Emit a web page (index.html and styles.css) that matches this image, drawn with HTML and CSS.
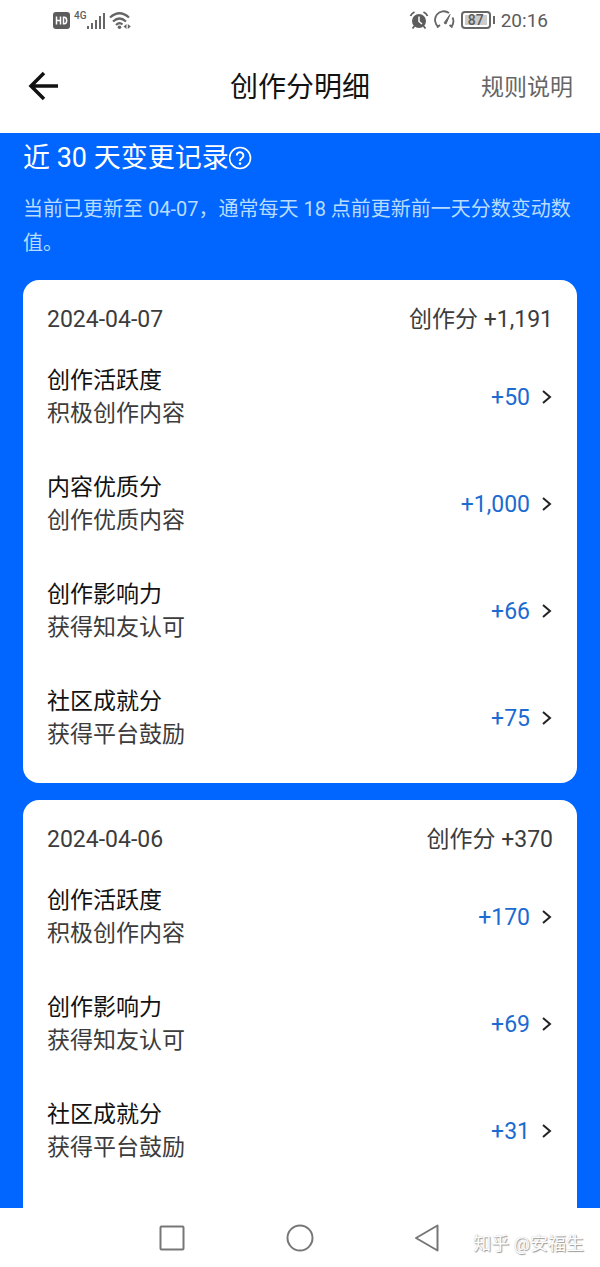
FILE: index.html
```html
<!DOCTYPE html>
<html lang="zh-CN">
<head>
    <meta charset="UTF-8">
    <meta name="viewport" content="width=device-width, initial-scale=1.0">
    <title>创作分明细</title>
    <link rel="stylesheet" href="styles.css">
</head>
<body>
    <div class="status-bar">
        <div class="status-group">
            <svg class="icon-hd" width="18" height="18" viewBox="0 0 18 18">
                <rect x="1" y="1" width="17" height="17" rx="3" fill="#5c5c5c"/>
                <path d="M4.500 5.500v8M8.500 5.500v8M4.500 9.500h4M11.500 6.200v6.600h.8q2.400 0 2.400-3.300t-2.400-3.300z" fill="none" stroke="#fff" stroke-width="1.500"/>
            </svg>
            <span class="network">4G</span>
            <svg width="20" height="18" viewBox="0 0 20 18" fill="#666">
                <rect x="0" y="15" width="2" height="3"/>
                <rect x="4" y="12" width="2" height="6"/>
                <rect x="8" y="9" width="2" height="9"/>
                <rect x="12" y="5" width="2" height="13"/>
                <rect x="16" y="2" width="2" height="16"/>
            </svg>
            <svg class="icon-wifi" width="22" height="18" viewBox="0 0 22 18" fill="none" stroke="#666" stroke-width="2.200">
                <path d="M1 6.500q9.500-8.500 19 0M4 10.500q6.500-6 13 0M7 14q3.500-3.500 6.500-.5"/>
                <circle cx="10.500" cy="16.200" r="1.800" fill="#666" stroke="none"/>
                <path d="M17.500 13v5l-3-2.500zM18.800 13v5l3-2.500z" fill="#666" stroke="none"/>
            </svg>
        </div>
        <div class="status-group">
            <svg width="20" height="20" viewBox="0 0 20 20" fill="none" stroke="#5c5c5c" stroke-width="2">
                <circle cx="10" cy="11" r="7" fill="#5c5c5c" stroke="none"/>
                <path d="M1.500 6q1-2.500 4-4M18.500 6q-1-2.500-4-4M5.500 16l-2 2.500M14.500 16l2 2.500" stroke-width="1.800"/>
                <path d="M10 6.500v5l3 2.500" stroke="#fff" stroke-width="1.500"/>
            </svg>
            <svg class="icon-gauge" width="22" height="20" viewBox="0 0 22 20" fill="none" stroke="#666" stroke-width="1.800">
                <path d="M4.500 17A8.500 8.500 0 0 1 15 3M18.500 7.500a8.500 8.500 0 0 1-1.500 9.500M3 17.500l3-2.500M18.500 17.500l-3-2.500"/>
                <path d="M10 13l6-8.500-4 9.500z" fill="#666" stroke-width="1"/>
            </svg>
            <span class="battery"><span class="battery-level">87</span></span>
            <span class="battery-tip"></span>
            <span class="clock">20:16</span>
        </div>
    </div>

    <header class="header">
        <button class="back" type="button" aria-label="返回">
            <svg width="32" height="32" viewBox="0 0 32 32" fill="none" stroke="#121212" stroke-width="3.500">
                <path d="M31 17H5M17 4L4 17l13 13"/>
            </svg>
        </button>
        <h1>创作分明细</h1>
        <a class="rules" href="#">规则说明</a>
    </header>

    <main class="content">
        <div class="heading">
            <h2>近 30 天变更记录</h2>
            <button class="help" type="button" aria-label="说明">
                <svg width="24" height="24" viewBox="0 0 24 24" fill="none" stroke="#fff" stroke-width="1.600">
                    <circle cx="11" cy="12" r="10.500"/>
                    <path d="M7.800 9.500a3.300 3.300 0 1 1 5.200 2.700q-2 1.200-2 2.900" stroke-width="2"/>
                    <circle cx="11" cy="17.600" r="1.300" fill="#fff" stroke="none"/>
                </svg>
            </button>
        </div>
        <p class="notice">当前已更新至 04-07，通常每天 18 点前更新前一天分数变动数值。</p>

        <section class="card">
            <div class="card-head">
                <span>2024-04-07</span>
                <span>创作分 +1,191</span>
            </div>
            <ul>
                <li><a class="row" href="#">
                    <span class="label"><strong>创作活跃度</strong><small>积极创作内容</small></span>
                    <span class="score">+50</span>
                    <svg class="chevron" viewBox="0 0 12 16"><path d="M2 2l7 6-7 6"/></svg>
                </a></li>
                <li><a class="row" href="#">
                    <span class="label"><strong>内容优质分</strong><small>创作优质内容</small></span>
                    <span class="score">+1,000</span>
                    <svg class="chevron" viewBox="0 0 12 16"><path d="M2 2l7 6-7 6"/></svg>
                </a></li>
                <li><a class="row" href="#">
                    <span class="label"><strong>创作影响力</strong><small>获得知友认可</small></span>
                    <span class="score">+66</span>
                    <svg class="chevron" viewBox="0 0 12 16"><path d="M2 2l7 6-7 6"/></svg>
                </a></li>
                <li><a class="row" href="#">
                    <span class="label"><strong>社区成就分</strong><small>获得平台鼓励</small></span>
                    <span class="score">+75</span>
                    <svg class="chevron" viewBox="0 0 12 16"><path d="M2 2l7 6-7 6"/></svg>
                </a></li>
            </ul>
        </section>

        <section class="card card-last">
            <div class="card-head">
                <span>2024-04-06</span>
                <span>创作分 +370</span>
            </div>
            <ul>
                <li><a class="row" href="#">
                    <span class="label"><strong>创作活跃度</strong><small>积极创作内容</small></span>
                    <span class="score">+170</span>
                    <svg class="chevron" viewBox="0 0 12 16"><path d="M2 2l7 6-7 6"/></svg>
                </a></li>
                <li><a class="row" href="#">
                    <span class="label"><strong>创作影响力</strong><small>获得知友认可</small></span>
                    <span class="score">+69</span>
                    <svg class="chevron" viewBox="0 0 12 16"><path d="M2 2l7 6-7 6"/></svg>
                </a></li>
                <li><a class="row" href="#">
                    <span class="label"><strong>社区成就分</strong><small>获得平台鼓励</small></span>
                    <span class="score">+31</span>
                    <svg class="chevron" viewBox="0 0 12 16"><path d="M2 2l7 6-7 6"/></svg>
                </a></li>
            </ul>
        </section>
    </main>

    <nav class="nav-bar">
        <button type="button" aria-label="最近任务">
            <svg width="28" height="28" viewBox="0 0 28 28"><rect x="2.500" y="2.500" width="23" height="23" rx="1"/></svg>
        </button>
        <button type="button" aria-label="主屏幕">
            <svg width="28" height="28" viewBox="0 0 28 28"><circle cx="14" cy="14" r="12.500"/></svg>
        </button>
        <button type="button" aria-label="返回上一页">
            <svg width="28" height="28" viewBox="0 0 28 28"><path d="M2 14L23.500 1.500v25z"/></svg>
        </button>
        <span class="watermark">知乎 @安福生</span>
    </nav>
</body>
</html>
```
FILE: styles.css
```css
:root {
    --blue: #0066ff;
    --score-color: #1c6bd0;
    --text-color: #121212;
    --text-secondary: #3c3c3c;
    --icon-gray: #666;
}

* {
    margin: 0;
    padding: 0;
    box-sizing: border-box;
}

body {
    font-family: Roboto, 'Noto Sans CJK SC', sans-serif;
    color: var(--text-color);
    background-color: white;
    display: flex;
    flex-direction: column;
    min-height: 100vh;
}

button {
    background: none;
    border: none;
    cursor: pointer;
}

a {
    color: inherit;
    text-decoration: none;
}

svg {
    display: block;
}

.status-bar {
    height: 40px;
    padding: 0 52px;
    display: flex;
    justify-content: space-between;
    align-items: center;
    color: #5c5c5c;
}

.status-group {
    display: flex;
    align-items: center;
}

.network {
    font-size: 10px;
    font-weight: 500;
    line-height: 10px;
    align-self: flex-start;
    margin-left: 4px;
}

.icon-wifi {
    margin-left: 2px;
}

.icon-gauge {
    margin: 0 5px 0 5px;
}

.battery {
    width: 30px;
    height: 18px;
    padding: 2px;
    border: 2px solid var(--icon-gray);
    border-radius: 4px;
}

.battery-level {
    display: block;
    background-color: #ccc;
    font-size: 14px;
    font-weight: 500;
    line-height: 10px;
    text-align: center;
}

.battery-tip {
    width: 2px;
    height: 8px;
    margin: 0 6px 0 2px;
    background-color: var(--icon-gray);
}

.clock {
    font-size: 19px;
}

.header {
    height: 93px;
    padding: 0 27px 3px;
    display: grid;
    grid-template-columns: 1fr auto 1fr;
    align-items: center;
}

.back {
    justify-self: start;
}

h1 {
    font-size: 28px;
    font-weight: 400;
}

.rules {
    justify-self: end;
    font-size: 23px;
    color: var(--icon-gray);
}

.content {
    flex: 1;
    padding: 5px 23px 0;
    background-color: var(--blue);
    display: flex;
    flex-direction: column;
}

.heading {
    display: flex;
    align-items: center;
    color: white;
}

h2 {
    font-size: 27px;
    font-weight: 400;
    line-height: 40px;
}

.notice {
    margin: 14px 0 20px;
    font-size: 20px;
    line-height: 34px;
    color: #b8dcff;
}

.card {
    padding: 23px 24px 32px;
    background-color: white;
    border-radius: 16px;
}

.card-last {
    flex: 1;
    margin-top: 17px;
    border-radius: 16px 16px 0 0;
}

.card-head {
    display: flex;
    justify-content: space-between;
    margin-bottom: 27px;
    font-size: 23px;
    line-height: 34px;
    color: var(--text-secondary);
}

ul {
    list-style: none;
    display: flex;
    flex-direction: column;
    gap: 41px;
}

.row {
    display: flex;
    align-items: center;
    font-size: 23px;
    line-height: 33px;
}

.label {
    flex: 1;
}

.label strong,
.label small {
    display: block;
    font-size: 23px;
    font-weight: 400;
}

.label small {
    color: var(--text-secondary);
}

.score {
    color: var(--score-color);
}

.chevron {
    width: 12px;
    height: 16px;
    margin-left: 11px;
    fill: none;
    stroke: #222;
    stroke-width: 2;
}

.nav-bar {
    position: relative;
    height: 59px;
    display: flex;
    justify-content: center;
    align-items: center;
    gap: 100px;
}

.nav-bar svg {
    fill: none;
    stroke: #777;
    stroke-width: 2;
    stroke-linejoin: round;
}

/* sits over the navigation bar */
.watermark {
    position: absolute;
    right: 16px;
    bottom: 12px;
    font-size: 18px;
    color: white;
    text-shadow: 1px 1px 1px #999, 0 0 1px #bbb;
}
```
